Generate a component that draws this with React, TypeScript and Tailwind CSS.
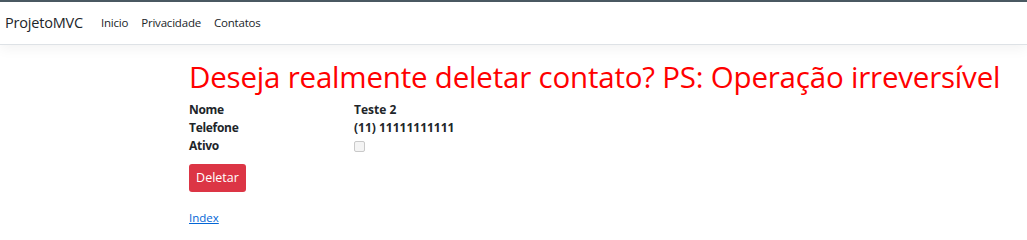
import React from "react";

export default function App() {
  const font = { fontFamily: '"Open Sans", "Noto Sans", sans-serif' };
  return (
    <div className="min-h-[240px] bg-white text-[#212529]" style={font}>
      <div className="h-[2px] bg-[#4b5a63]" />
      <header className="h-[43px] border-b border-[#dee2e6] shadow-[0_4px_12px_rgba(0,0,0,0.05)] flex items-center">
        <span className="ml-[5px] text-[14.5px] tracking-[-0.2px] text-[#212529] mr-[18px] leading-none">ProjetoMVC</span>
        <nav className="flex gap-[13px] text-[11.5px] tracking-[-0.2px] text-[#212529] leading-none">
          <span>Inicio</span>
          <span>Privacidade</span>
          <span>Contatos</span>
        </nav>
      </header>
      <main className="pl-[189px] pt-[12px]">
        <h1 className="text-[29.5px] leading-[40px] text-[#ff0000] font-normal tracking-[-0.2px]">
          Deseja realmente deletar contato? PS: Operação irreversível
        </h1>
        <div className="grid grid-cols-[165px_auto] text-[12px] leading-[18px] font-bold mt-[4px]">
          <div className="tracking-[-0.3px]">Nome</div>
          <div>Teste 2</div>
          <div className="tracking-[-0.3px]">Telefone</div>
          <div>(11) 11111111111</div>
          <div className="tracking-[-0.3px]">Ativo</div>
          <div className="flex items-center">
            <span className="w-[11px] h-[11px] rounded-[2px] border border-[#c9c9c9] bg-[#f4f4f4]" />
          </div>
        </div>
        <button className="mt-[9px] h-[28px] w-[57px] rounded-[3px] bg-[#dc3545] text-white text-[12.5px] flex items-center justify-center">
          Deletar
        </button>
        <div className="mt-[17px] text-[11.5px] leading-[18px]">
          <a className="text-[#0366d6] underline">Index</a>
        </div>
      </main>
    </div>
  );
}
